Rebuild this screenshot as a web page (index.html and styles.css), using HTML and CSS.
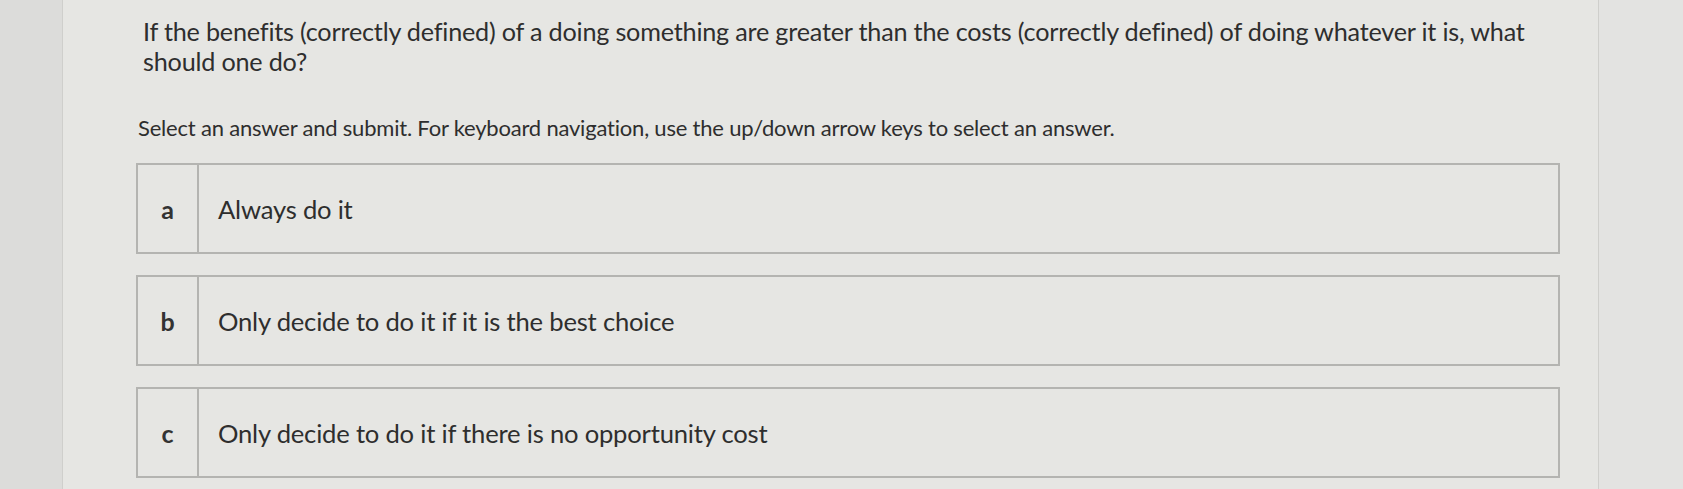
FILE: index.html
```html
<!DOCTYPE html>
<html>
<head>
<meta charset="utf-8">
<link rel="stylesheet" href="styles.css">
</head>
<body>
<div class="page">
  <div class="gutter-left"></div>
  <main class="panel">
    <p class="question">If the benefits (correctly defined) of a doing something are greater than the costs (correctly defined) of doing whatever it is, what should one do?</p>
    <p class="hint">Select an answer and submit. For keyboard navigation, use the up/down arrow keys to select an answer.</p>
    <div class="options">
      <div class="option">
        <div class="letter">a</div>
        <div class="answer">Always do it</div>
      </div>
      <div class="option">
        <div class="letter">b</div>
        <div class="answer">Only decide to do it if it is the best choice</div>
      </div>
      <div class="option">
        <div class="letter">c</div>
        <div class="answer">Only decide to do it if there is no opportunity cost</div>
      </div>
    </div>
  </main>
  <div class="gutter-right"></div>
</div>
</body>
</html>
```
FILE: styles.css
```css
html, body {
  margin: 0;
  padding: 0;
  height: 100%;
}
body {
  background: #e1e1df;
  font-family: Lato, "Open Sans", sans-serif;
  color: #2e2e2e;
  overflow: hidden;
}
.page {
  display: flex;
  height: 489px;
}
.gutter-left {
  width: 62px;
  flex: none;
  background: #dcdcda;
}
.gutter-right {
  flex: 1;
  background: #e3e3e1;
}
.panel {
  width: 1537px;
  flex: none;
  background: #e6e6e3;
  border-left: 1px solid #cfcfcc;
  border-right: 1px solid #cfcfcc;
  padding: 16px 0 0 0;
  box-sizing: border-box;
}
.question {
  margin: 0 50px 0 80px;
  font-size: 25.2px;
  line-height: 30px;
  letter-spacing: -0.2px;
}
.hint {
  margin: 39px 0 0 75px;
  font-size: 22px;
  line-height: 26px;
  letter-spacing: -0.2px;
}
.options {
  margin: 22px 38px 0 73px;
  display: flex;
  flex-direction: column;
  gap: 21px;
}
.option {
  display: flex;
  height: 91px;
  border: 2px solid #b4b4b1;
  box-sizing: border-box;
}
.letter {
  width: 59px;
  flex: none;
  border-right: 2px solid #b4b4b1;
  display: flex;
  align-items: center;
  justify-content: center;
  font-size: 25px;
  font-weight: 700;
  color: #333;
}
.answer {
  display: flex;
  align-items: center;
  padding-left: 19px;
  font-size: 25.6px;
  letter-spacing: -0.2px;
}
```
